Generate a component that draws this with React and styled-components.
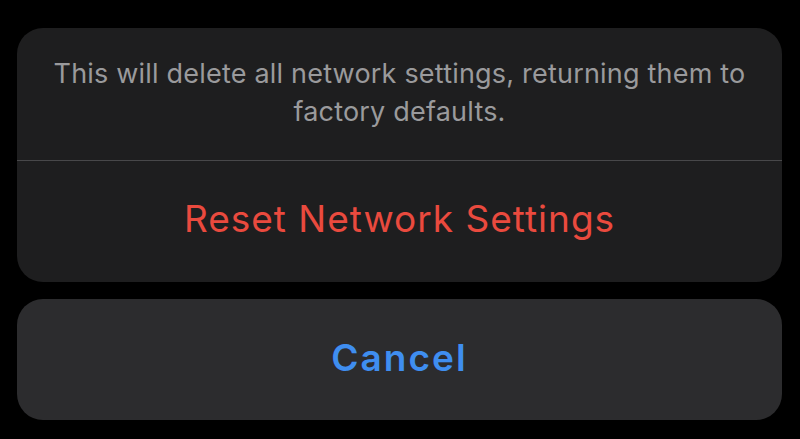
import styled, { createGlobalStyle } from "styled-components";

const GlobalStyle = createGlobalStyle`
  html, body {
    margin: 0;
    background: #000;
  }
  body {
    font-family: Inter, "Noto Sans", "Liberation Sans", sans-serif;
    -webkit-font-smoothing: antialiased;
  }
`;

const Sheet = styled.div`
  display: flex;
  flex-direction: column;
  gap: 17px;
  padding: 28px 18px 0 17px;
  height: 439px;
  box-sizing: border-box;
`;

const Group = styled.div`
  background: ${(p) => (p.raised ? "#2c2c2e" : "#1e1e1f")};
  border-radius: 26px;
  overflow: hidden;
  display: flex;
  flex-direction: column;
`;

const Message = styled.p`
  margin: 0;
  height: 133px;
  box-sizing: border-box;
  padding: 27px 24px 0;
  border-bottom: 1px solid #48484a;
  text-align: center;
  color: #9a9a9c;
  font-size: 27px;
  letter-spacing: 0.2px;
  line-height: 38px;
`;

const Action = styled.button`
  height: 121px;
  padding: 0 0 ${(p) => p.lift}px;
  border: 0;
  background: transparent;
  font-family: inherit;
  font-size: 37px;
  font-weight: ${(p) => (p.bold ? 600 : 400)};
  letter-spacing: ${(p) => (p.bold ? 2 : 1)}px;
  color: ${(p) => (p.destructive ? "#ea4a3e" : "#3f8ef0")};
  cursor: pointer;
`;

export default function App() {
  return (
    <>
      <GlobalStyle />
      <Sheet>
        <Group>
          <Message>
            This will delete all network settings, returning them to factory defaults.
          </Message>
          <Action destructive lift={6}>Reset Network Settings</Action>
        </Group>
        <Group raised>
          <Action bold lift={4}>Cancel</Action>
        </Group>
      </Sheet>
    </>
  );
}
